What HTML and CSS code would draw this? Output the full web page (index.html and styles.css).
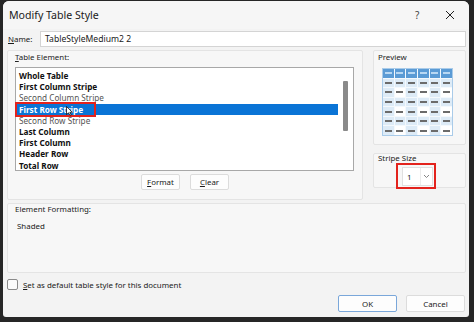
FILE: index.html
```html
<!DOCTYPE html>
<html lang="en">
<head>
    <meta charset="UTF-8">
    <title>Modify Table Style</title>
    <link rel="stylesheet" href="styles.css">
</head>
<body>

    <div class="dialog">
        <div class="titlebar">
            <span class="title">Modify Table Style</span>
            <span class="help">?</span>
            <span class="close">
                <svg width="10" height="10" viewBox="0 0 10 10"><path d="M1 1L9 9M9 1L1 9" stroke="#222" stroke-width="1"/></svg>
            </span>
        </div>

        <div class="name-row">
            <label class="name-label"><u>N</u>ame:</label>
            <div class="textbox">TableStyleMedium2 2</div>
        </div>

        <div class="main">
            <div class="group elements">
                <div class="caption"><u>T</u>able Element:</div>
                <div class="listbox">
                    <ul class="items">
                        <li class="strong">Whole Table</li>
                        <li class="strong">First Column Stripe</li>
                        <li>Second Column Stripe</li>
                        <li class="strong selected">
                            First Row Stripe
                            <!-- red highlight drawn over the selected row -->
                            <span class="marker"></span>
                            <svg class="cursor" width="7" height="10" viewBox="0 0 7 10"><path d="M0.5 0.5L0.5 8.5L2.5 6.8L4 9.5L5.2 8.9L3.8 6.3L6.3 6.3Z" fill="#fff" stroke="#000" stroke-width="0.7"/></svg>
                        </li>
                        <li>Second Row Stripe</li>
                        <li class="strong">Last Column</li>
                        <li class="strong">First Column</li>
                        <li class="strong">Header Row</li>
                        <li class="strong">Total Row</li>
                    </ul>
                    <div class="scroll"><div class="thumb"></div></div>
                </div>
                <div class="actions">
                    <button class="btn small"><u>F</u>ormat</button>
                    <button class="btn small"><u>C</u>lear</button>
                </div>
            </div>

            <div class="side">
                <div class="group preview">
                    <div class="caption">Preview</div>
                    <div class="grid" id="grid"></div>
                </div>
                <div class="group stripe">
                    <div class="caption">Stripe Size</div>
                    <div class="stripe-wrap">
                        <div class="marker-box">
                            <div class="combo">
                                <span class="combo-value">1</span>
                                <span class="combo-arrow">
                                    <svg width="7" height="5" viewBox="0 0 7 5"><path d="M1 1L3.5 3.5L6 1" fill="none" stroke="#777" stroke-width="0.9"/></svg>
                                </span>
                            </div>
                        </div>
                    </div>
                </div>
            </div>
        </div>

        <div class="group formatting">
            <div class="caption">Element Formatting:</div>
            <div class="value">Shaded</div>
        </div>

        <div class="check-row">
            <span class="checkbox"></span>
            <span><u>S</u>et as default table style for this document</span>
        </div>

        <div class="footer-buttons">
            <button class="btn default">OK</button>
            <button class="btn">Cancel</button>
        </div>
    </div>

    <script>
        // Build the preview table: header row + 6 body rows, 6 columns
        const grid = document.getElementById('grid');
        for (let r = 0; r < 7; r++) {
            for (let c = 0; c < 6; c++) {
                const cell = document.createElement('div');
                cell.className = 'cell';
                if (r === 0) {
                    cell.classList.add('head');
                } else if (r % 2 === 0 && c % 2 === 1) {
                    cell.classList.add('plain');
                }
                cell.appendChild(document.createElement('span'));
                grid.appendChild(cell);
            }
        }
    </script>

</body>
</html>
```

FILE: styles.css
```css
body {
    margin: 0;
    padding: 1px 5px 5px 3px;
    background-color: #262626;
    font-family: 'Noto Sans', 'Open Sans', sans-serif;
    font-size: 7.9px;
    color: #1a1a1a;
}
u {
    text-decoration: underline;
    text-underline-offset: 1px;
}
.dialog {
    width: 466px;
    height: 316px;
    background-color: #f3f3f3;
    border-radius: 6px 6px 3px 3px;
    display: flex;
    flex-direction: column;
    overflow: hidden;
}
.titlebar {
    height: 28px;
    display: flex;
    align-items: center;
    padding-left: 6px;
    background-color: #f6f6f6;
}
.title {
    font-size: 10.6px;
    flex: 1;
}
.help {
    font-size: 10px;
    color: #444;
    width: 20px;
}
.close {
    width: 30px;
    display: flex;
    justify-content: center;
    margin-right: 4px;
}
.name-row {
    display: flex;
    align-items: center;
    margin-top: 2px;
    height: 16px;
    padding: 0 3px 0 5px;
}
.name-label {
    width: 32px;
}
.textbox {
    flex: 1;
    height: 16px;
    box-sizing: border-box;
    border: 1px solid #d4d4d4;
    background-color: #fff;
    padding-left: 4px;
    line-height: 14px;
    font-size: 8.6px;
}
.main {
    display: flex;
    margin-top: 3px;
    height: 150px;
    padding: 0 3px 0 4px;
    gap: 10px;
}
.group {
    box-sizing: border-box;
    border: 1px solid #e4e4e4;
    background-color: #f7f7f7;
    border-radius: 2px;
}
.caption {
    line-height: 11px;
    padding: 0 0 0 7px;
    color: #222;
}
.elements {
    width: 356px;
    display: flex;
    flex-direction: column;
}
.elements .caption {
    padding-top: 1px;
}
.listbox {
    margin: 4px 8px 0 7px;
    height: 104px;
    box-sizing: border-box;
    border: 1px solid #a8a8a8;
    background-color: #fff;
    display: flex;
}
.items {
    list-style: none;
    margin: 0;
    padding: 2px 0 0 0;
    flex: 1;
    font-size: 8.2px;
}
.items li {
    height: 11.2px;
    line-height: 11.2px;
    padding-left: 3px;
    color: #555;
    position: relative;
}
.items li.strong {
    font-weight: bold;
    color: #111;
}
.items li.selected {
    background-color: #0a74d6;
    color: #fff;
}
.marker {
    position: absolute;
    left: -1px;
    top: -2px;
    width: 81px;
    height: 15px;
    box-sizing: border-box;
    border: 2px solid #e3231d;
}
.cursor {
    position: absolute;
    left: 50px;
    top: 2px;
}
.scroll {
    width: 15px;
    display: flex;
    justify-content: center;
}
.thumb {
    width: 5px;
    height: 50px;
    margin-top: 13px;
    background-color: #8a8a8a;
    border-radius: 1px;
}
.actions {
    display: flex;
    justify-content: center;
    gap: 10px;
    margin-top: 3px;
}
.btn {
    font-family: inherit;
    font-size: 7.9px;
    color: #1a1a1a;
    background-color: #fdfdfd;
    border: 1px solid #dcdcdc;
    border-radius: 2px;
    height: 17px;
    padding: 0;
}
.btn.small {
    width: 39px;
    height: 16px;
}
.side {
    width: 93px;
    display: flex;
    flex-direction: column;
}
.preview {
    height: 95px;
}
.preview .caption {
    padding: 1px 0 0 4px;
}
.grid {
    margin: 5px 0 0 8px;
    width: 71px;
    height: 68px;
    box-sizing: border-box;
    border: 1px solid #a9cbe9;
    background-color: #f4f9fd;
    display: grid;
    grid-template-columns: repeat(6, 1fr);
    grid-template-rows: repeat(7, 1fr);
    gap: 1px;
}
.cell {
    background-color: #ddebf7;
    display: flex;
    align-items: center;
    justify-content: center;
}
.cell span {
    width: 7px;
    height: 2px;
    background-color: #6b6b6b;
}
.cell.head {
    background-color: #5b9bd5;
}
.cell.head span {
    background-color: #b9d8f3;
}
.cell.plain {
    background-color: #fff;
}
.stripe {
    margin-top: 8px;
    height: 35px;
}
.stripe .caption {
    padding: 0 0 0 4px;
    line-height: 9px;
}
.stripe-wrap {
    display: flex;
    justify-content: center;
    padding-right: 7px;
}
.marker-box {
    width: 40px;
    height: 26px;
    box-sizing: border-box;
    border: 2px solid #e3231d;
    padding: 2px 0 0 4px;
}
.combo {
    width: 31px;
    height: 19px;
    box-sizing: border-box;
    border: 1px solid #e0e0e0;
    background-color: #fff;
    display: flex;
    align-items: center;
}
.combo-value {
    width: 13px;
    padding-left: 4px;
}
.combo-arrow {
    flex: 1;
    height: 100%;
    border-left: 1px solid #ececec;
    display: flex;
    align-items: center;
    justify-content: center;
}
.formatting {
    margin: 3px 3px 0 4px;
    height: 70px;
}
.formatting .caption {
    padding: 0 0 0 7px;
}
.formatting .value {
    padding: 6px 0 0 9px;
}
.check-row {
    display: flex;
    align-items: center;
    gap: 5px;
    margin-top: 6px;
    padding-left: 4px;
    height: 11px;
}
.checkbox {
    width: 11px;
    height: 11px;
    box-sizing: border-box;
    border: 1px solid #8a8a8a;
    border-radius: 2px;
    background-color: #fafafa;
}
.footer-buttons {
    display: flex;
    justify-content: flex-end;
    gap: 9px;
    margin-top: 5px;
    padding-right: 4px;
}
.footer-buttons .btn {
    width: 59px;
}
.btn.default {
    border-color: #7aa7da;
}
```
